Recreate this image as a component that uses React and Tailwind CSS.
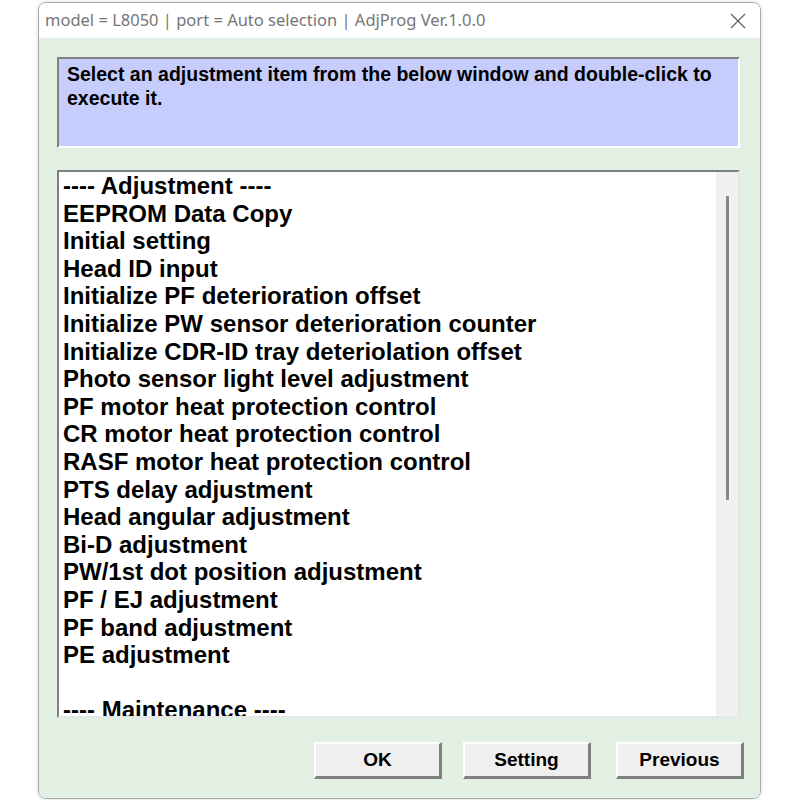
import React from "react";

const items = [
  "---- Adjustment ----",
  "EEPROM Data Copy",
  "Initial setting",
  "Head ID input",
  "Initialize PF deterioration offset",
  "Initialize PW sensor deterioration counter",
  "Initialize CDR-ID tray deteriolation offset",
  "Photo sensor light level adjustment",
  "PF motor heat protection control",
  "CR motor heat protection control",
  "RASF motor heat protection control",
  "PTS delay adjustment",
  "Head angular adjustment",
  "Bi-D adjustment",
  "PW/1st dot position adjustment",
  "PF / EJ adjustment",
  "PF band adjustment",
  "PE adjustment",
  "\u00a0",
  "---- Maintenance ----",
];

function Btn({ children }) {
  return (
    <button className="w-[128px] h-[37px] bg-[#efefef] border-t-2 border-l-2 border-b-[3px] border-r-[3px] border-t-white border-l-white border-b-[#808080] border-r-[#808080] font-bold text-[19px] leading-[24px] text-black" style={{ fontFamily: '"Liberation Sans", Arial, sans-serif' }}>
      {children}
    </button>
  );
}

export default function App() {
  return (
    <div className="w-[800px] h-[800px] bg-white pt-[2px] pl-[38px]">
      <div className="w-[723px] h-[797px] rounded-[8px] border border-[#a8a8a8] overflow-hidden flex flex-col shadow-[0_0_4px_rgba(0,0,0,0.15)]">
        <div className="h-[35px] bg-white flex items-center justify-between pl-[6px] pr-[14px] shrink-0">
          <span className="text-[16.5px] text-[#767676]" style={{ fontFamily: '"Noto Sans", "Open Sans", sans-serif' }}>
            model = L8050 | port = Auto selection | AdjProg Ver.1.0.0
          </span>
          <svg width="16" height="16" viewBox="0 0 16 16" className="mt-[1px]">
            <path d="M1 1 L15 15 M15 1 L1 15" stroke="#5a5a5a" strokeWidth="1.1" fill="none" />
          </svg>
        </div>
        <div className="flex-1 bg-[#e1f0e2] pl-[18px] pt-[19px] flex flex-col" style={{ fontFamily: '"Liberation Sans", Arial, sans-serif' }}>
          <div className="w-[683px] h-[91px] bg-[#c6cdfc] border-t-2 border-l-2 border-b-2 border-r-2 border-t-[#808080] border-l-[#808080] border-b-white border-r-white pl-[8px] pt-[3px] pr-[6px] text-[19.5px] leading-[24px] font-bold text-black">
            Select an adjustment item from the below window and double-click to execute it.
          </div>
          <div className="mt-[22px] w-[683px] h-[548px] bg-white border-t-2 border-l-2 border-b-2 border-r-2 border-t-[#808080] border-l-[#808080] border-b-[#e6e6e6] border-r-[#e6e6e6] flex overflow-hidden">
            <div className="flex-1 overflow-hidden pl-[4px]">
              {items.map((t, i) => (
                <div key={i} className="text-[24px] leading-[27.6px] font-bold text-black whitespace-nowrap">
                  {t}
                </div>
              ))}
            </div>
            <div className="w-[22px] h-full bg-[#f0f0f0] flex justify-center pt-[24px]">
              <div className="w-[3px] h-[304px] bg-[#858585] rounded-[1px]" />
            </div>
          </div>
          <div className="mt-[24px] flex pl-[257px] gap-[21px]">
            <Btn>OK</Btn>
            <Btn>Setting</Btn>
            <div className="ml-[4px]">
              <Btn>Previous</Btn>
            </div>
          </div>
        </div>
      </div>
    </div>
  );
}
